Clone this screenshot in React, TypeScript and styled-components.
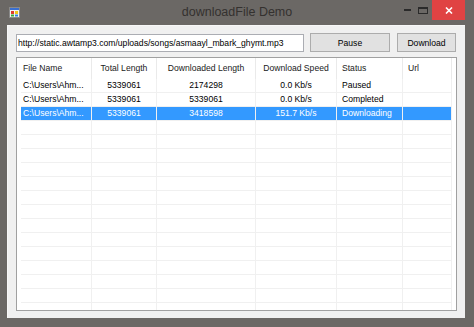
import React from 'react';
import styled, { createGlobalStyle } from 'styled-components';

interface Download {
  file: string,
  total: string,
  downloaded: string,
  speed: string,
  status: string,
  url: string
}

const downloads: Download[] = [
  { file: "C:\\Users\\Ahm...", total: "5339061", downloaded: "2174298", speed: "0.0 Kb/s", status: "Paused", url: "" },
  { file: "C:\\Users\\Ahm...", total: "5339061", downloaded: "5339061", speed: "0.0 Kb/s", status: "Completed", url: "" },
  { file: "C:\\Users\\Ahm...", total: "5339061", downloaded: "3418598", speed: "151.7 Kb/s", status: "Downloading", url: "" },
];

const columns = [
  { title: "File Name", align: "left" },
  { title: "Total Length", align: "center" },
  { title: "Downloaded Length", align: "center" },
  { title: "Download Speed", align: "center" },
  { title: "Status", align: "left" },
  { title: "Url", align: "left" },
];

const SELECTED = 2;
const EMPTY_ROWS = 15;

const App: React.FC = () => {
  return (
    <>
      <GlobalStyle />
      <Window>
        <TitleBar>
          <AppIcon width="11" height="11" viewBox="0 0 11 11">
            <rect x="0.5" y="0.5" width="10" height="10" fill="#f4f4f4" stroke="#8a8a8a" />
            <rect x="1" y="1" width="9" height="2" fill="#3a6fd0" />
            <rect x="2" y="4" width="3" height="3" fill="#e03b2b" />
            <rect x="6" y="4" width="3" height="3" fill="#f2c618" />
            <rect x="2" y="7.5" width="3" height="2" fill="#3aa83a" />
            <rect x="6" y="7.5" width="3" height="2" fill="#2f7fe0" />
          </AppIcon>
          <Title>downloadFile Demo</Title>
          <Controls>
            <ControlButton $width={14}>
              <svg width="7" height="2" viewBox="0 0 7 2"><rect width="7" height="2" fill="#2a2a2a" /></svg>
            </ControlButton>
            <ControlButton $width={18}>
              <svg width="10" height="7" viewBox="0 0 10 7">
                <rect x="0.5" y="0.5" width="9" height="6" fill="none" stroke="#2a2a2a" />
                <rect x="0" y="0" width="10" height="2" fill="#2a2a2a" />
              </svg>
            </ControlButton>
            <CloseButton>
              <svg width="8" height="7" viewBox="0 0 8 7">
                <path d="M1 0.5 L7 6.5 M7 0.5 L1 6.5" stroke="#fff" strokeWidth="1.6" />
              </svg>
            </CloseButton>
          </Controls>
        </TitleBar>
        <Frame>
          <Client>
            <Toolbar>
              <UrlBox readOnly value="http://static.awtamp3.com/uploads/songs/asmaayl_mbark_ghymt.mp3" />
              <Button $width={80}>Pause</Button>
              <Button $width={59}>Download</Button>
            </Toolbar>
            <ListView>
              <HeaderRow>
                {columns.map((c, i) => (
                  <HeaderCell key={c.title} $align={c.align} $first={i === 0}>{c.title}</HeaderCell>
                ))}
              </HeaderRow>
              {downloads.map((d, idx) => {
                const values = [d.file, d.total, d.downloaded, d.speed, d.status, d.url];
                return (
                  <Row key={idx} $selected={idx === SELECTED}>
                    {values.map((v, i) => (
                      <Cell key={i} $align={columns[i].align} $first={i === 0}>{v}</Cell>
                    ))}
                  </Row>
                );
              })}
              {Array.from({ length: EMPTY_ROWS }).map((_, idx) => (
                <Row key={"e" + idx} $selected={false}>
                  {columns.map((c, i) => <Cell key={i} $align={c.align} $first={i === 0} />)}
                </Row>
              ))}
            </ListView>
          </Client>
        </Frame>
      </Window>
    </>
  );
}

export default App;

const GlobalStyle = createGlobalStyle`
  body {
    margin: 0;
    background: #6b6865;
    font-family: "Liberation Sans", Arial, sans-serif;
  }
`;

const Window = styled.div`
  width: 474px;
  height: 327px;
  background: #6b6865;
  display: flex;
  flex-direction: column;
  overflow: hidden;
`;

const TitleBar = styled.div`
  height: 25px;
  flex-shrink: 0;
  display: grid;
  grid-template-columns: 1fr auto 1fr;
  align-items: start;
`;

const AppIcon = styled.svg`
  margin: 7px 0 0 9px;
`;

const Title = styled.div`
  font-family: "Liberation Sans", Arial, sans-serif;
  font-size: 12.5px;
  line-height: 25px;
  color: #34312f;
`;

const Controls = styled.div`
  justify-self: end;
  display: flex;
  margin-right: 9px;
`;

const ControlButton = styled.div<{ $width: number }>`
  width: ${p => p.$width}px;
  height: 20px;
  display: flex;
  align-items: center;
  justify-content: center;
`;

const CloseButton = styled.div`
  width: 33px;
  height: 20px;
  background: #e04343;
  display: flex;
  align-items: center;
  justify-content: center;
`;

const Frame = styled.div`
  flex: 1;
  min-height: 0;
  display: flex;
  padding: 0 9px 9px 7px;
`;

const Client = styled.div`
  flex: 1;
  min-height: 0;
  background: #f0f0f0;
  border-top: 1px solid #f7f7f7;
  border-left: 1px solid #f7f7f7;
  padding: 7px 8px 7px 8px;
  display: flex;
  flex-direction: column;
  gap: 5px;
`;

const Toolbar = styled.div`
  display: flex;
  align-items: center;
  height: 19px;
  flex-shrink: 0;
`;

const UrlBox = styled.input`
  width: 288px;
  height: 18px;
  box-sizing: border-box;
  border: 1px solid #abadb3;
  background: #fff;
  font-family: "Liberation Sans", Arial, sans-serif;
  font-size: 8.6px;
  color: #000;
  padding: 0 1px;
  margin-right: 6px;
  outline: none;
`;

const Button = styled.button<{ $width: number }>`
  width: ${p => p.$width}px;
  height: 19px;
  box-sizing: border-box;
  border: 1px solid #acacac;
  background: #e1e1e1;
  font-family: "Liberation Sans", Arial, sans-serif;
  font-size: 8.6px;
  color: #000;
  padding: 0;
  margin-right: 7px;
  &:last-child { margin-right: 0; }
`;

const ListView = styled.div`
  flex: 1;
  min-height: 0;
  background: #fff;
  border: 1px solid #a0a0a0;
  padding-left: 4px;
  overflow: hidden;
`;

const grid = `
  display: grid;
  grid-template-columns: 71px 65px 99px 81px 66px 49px;
`;

const HeaderRow = styled.div`
  ${grid}
  height: 21px;
  margin-left: -4px;
  padding-left: 4px;
`;

const HeaderCell = styled.div<{ $align: string, $first: boolean }>`
  font-size: 8.6px;
  line-height: 21px;
  color: #1a1a1a;
  text-align: ${p => p.$align};
  padding-left: ${p => p.$align === "left" ? (p.$first ? 2 : 5) : 0}px;
  border-right: 1px solid #eaeaea;
  white-space: nowrap;
`;

const Row = styled.div<{ $selected: boolean }>`
  ${grid}
  height: 14px;
  box-sizing: border-box;
  border-bottom: 1px solid #f0f0f0;
  background: ${p => p.$selected ? "#3399ff" : "transparent"};
  color: ${p => p.$selected ? "#fff" : "#000"};
  width: 431px;
`;

const Cell = styled.div<{ $align: string, $first: boolean }>`
  font-size: 8.6px;
  line-height: 13px;
  text-align: ${p => p.$align};
  padding-left: ${p => p.$align === "left" ? (p.$first ? 2 : 5) : 0}px;
  border-right: 1px solid #f0f0f0;
  white-space: nowrap;
  overflow: hidden;
`;
